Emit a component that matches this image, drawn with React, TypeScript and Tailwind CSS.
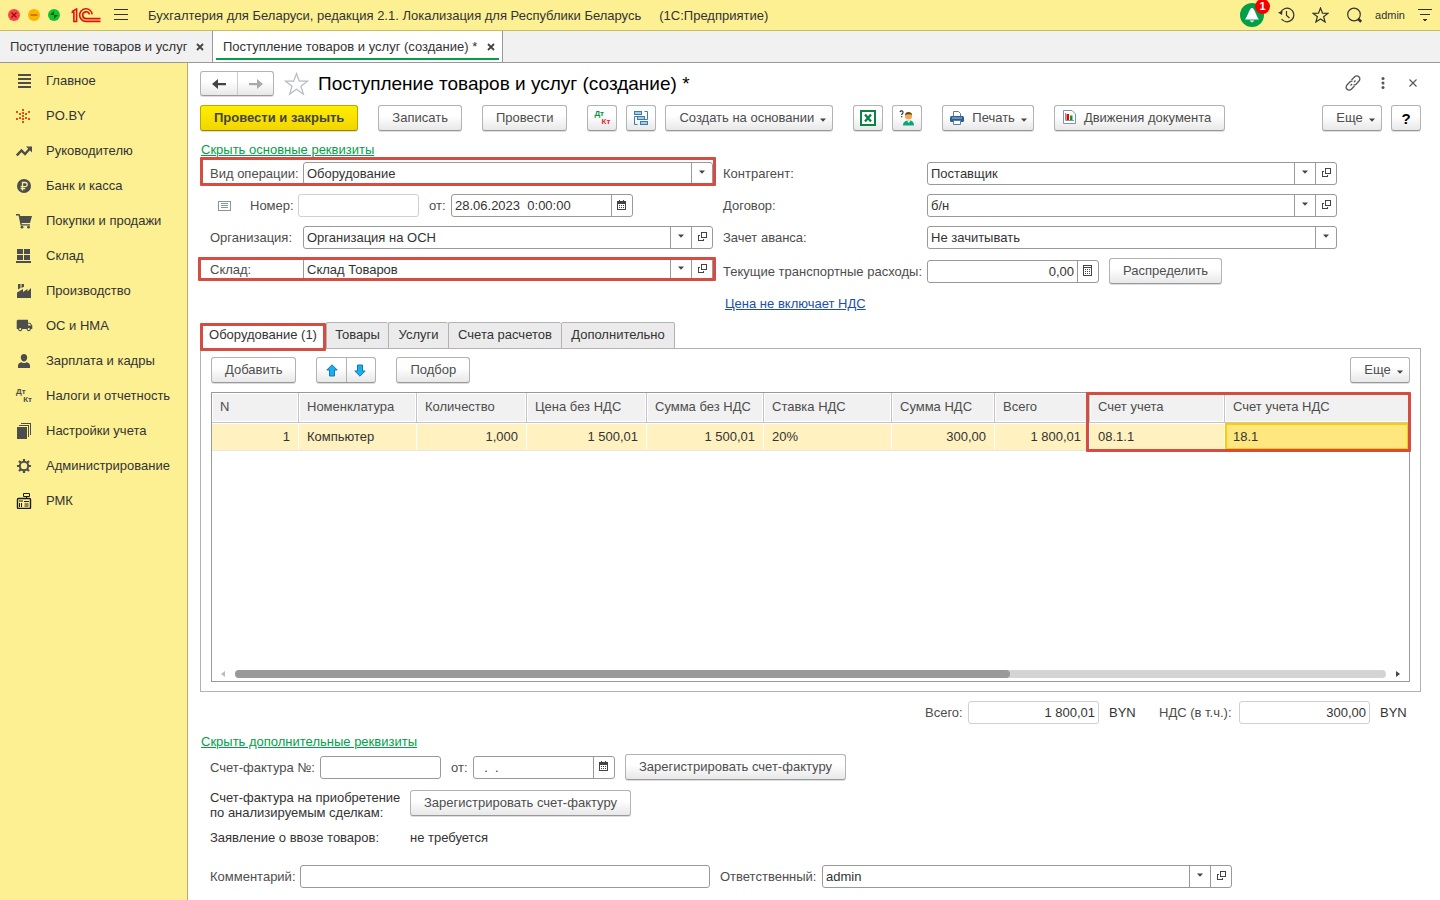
import type { ReactNode } from 'react'
import clsx from 'clsx'
import { MdLocalShipping } from 'react-icons/md'

/* ---------- small icons ---------- */

function Caret({ className }: { className?: string }) {
  return (
    <svg className={className} width="6" height="4" viewBox="0 0 6 4" fill="#444" aria-hidden="true">
      <path d="M0 0.5h6L3 3.8z" />
    </svg>
  )
}

function OpenIcon() {
  return (
    <svg width="9" height="9" viewBox="0 0 9 9" fill="none" stroke="#444" shapeRendering="crispEdges" aria-hidden="true">
      <rect x="3.5" y="0.5" width="5" height="5" />
      <path d="M2 3.5H0.5v5h5V7" />
    </svg>
  )
}

function CalendarIcon() {
  return (
    <svg width="9" height="10" viewBox="0 0 9 10" shapeRendering="crispEdges" aria-hidden="true">
      <path fill="#444" d="M0 1h9v9H0z M2 0h1v1H2z M6 0h1v1H6z" />
      <path fill="#fff" d="M1 4h7v5H1z" />
      <path fill="#444" d="M2 5h1v1H2z M4 5h1v1H4z M6 5h1v1H6z M2 7h1v1H2z M4 7h1v1H4z M6 7h1v1H6z" />
    </svg>
  )
}

function CalcIcon() {
  return (
    <svg width="9" height="11" viewBox="0 0 9 11" shapeRendering="crispEdges" aria-hidden="true">
      <path fill="#444" d="M0 0h9v11H0z" />
      <path fill="#fff" d="M1 1h7v1H1z M1 3h7v7H1z" />
      <path fill="#444" d="M2 4h1v1H2z M4 4h1v1H4z M6 4h1v1H6z M2 6h1v1H2z M4 6h1v1H4z M6 6h1v1H6z M2 8h1v1H2z M4 8h1v1H4z M6 8h1v1H6z" />
    </svg>
  )
}

function DtKt({ color }: { color?: boolean }) {
  return (
    <span className="flex w-4 flex-col text-left text-[8px] leading-[8px] font-bold" aria-hidden="true">
      <span className={color ? 'text-[#009646]' : 'text-[#4d4d4d]'}>Дт</span>
      <span className={clsx('text-right', color ? 'text-[#e5252c]' : 'text-[#4d4d4d]')}>Кт</span>
    </span>
  )
}

function Logo() {
  return (
    <svg width="30" height="15" viewBox="0 0 30 15" fill="none" stroke="#e3120b" strokeWidth="1.6" aria-label="1С">
      <path d="M0.5 4.2h2.4v9.3h2.7V1L1.2 3.4" />
      <path d="M21.2 6.4A6.3 6.3 0 1 0 15 13.4H29.5" />
      <path d="M18.4 6.4A3.4 3.4 0 1 0 15 10.6H29.5" />
    </svg>
  )
}

/* ---------- sidebar ---------- */

const ink = '#4d4d4d'

const MENU: { label: string; icon: ReactNode }[] = [
  {
    label: 'Главное',
    icon: (
      <svg width="16" height="16" viewBox="0 0 16 16" fill={ink} shapeRendering="crispEdges">
        <path d="M2 1h13v2H2z M2 5h13v2H2z M2 9h13v2H2z M2 13h13v2H2z" />
      </svg>
    ),
  },
  {
    label: 'PO.BY',
    icon: (
      <svg width="16" height="16" viewBox="0 0 16 16" fill="#e8500a" shapeRendering="crispEdges">
        <path d="M6 1h2v2H6z M6 4h2v2H6z M6 7h2v2H6z M6 10h2v2H6z M6 13h2v2H6z M0 3h2v2H0z M0 10h2v2H0z M3 5h2v2H3z M3 9h2v2H3z M9 5h2v2H9z M9 9h2v2H9z M12 3h2v2h-2z M12 10h2v2h-2z" />
      </svg>
    ),
  },
  {
    label: 'Руководителю',
    icon: (
      <svg width="16" height="16" viewBox="0 0 16 16" fill="none" stroke={ink} strokeWidth="2.4">
        <path d="M0.8 12.5L5.5 7.5l3.5 3.5 4.5-5" />
        <path d="M10 3.5h6v6z" fill={ink} stroke="none" />
      </svg>
    ),
  },
  {
    label: 'Банк и касса',
    icon: (
      <svg width="16" height="16" viewBox="0 0 16 16">
        <circle cx="8" cy="8" r="7" fill={ink} />
        <path d="M6.5 12.5V4.5h2.6a2 2 0 0 1 0 4.2H4.6M4.6 10.6h4.6" fill="none" stroke="#fcf093" strokeWidth="1.3" />
      </svg>
    ),
  },
  {
    label: 'Покупки и продажи',
    icon: (
      <svg width="16" height="16" viewBox="0 0 16 16" fill={ink}>
        <path d="M0 1h3.5l0.8 2H16l-2 7H5.5l0.3 1.2H14V12.400H4.600L2.600 2.600H0z" />
        <circle cx="6" cy="14.2" r="1.4" />
        <circle cx="12.500" cy="14.2" r="1.4" />
      </svg>
    ),
  },
  {
    label: 'Склад',
    icon: (
      <svg width="16" height="16" viewBox="0 0 16 16" fill={ink} shapeRendering="crispEdges">
        <path d="M1 1h6v5H1z M8 1h6v5H8z M1 7h6v5H1z M8 7h6v5H8z M0 13h15v2H0z" />
      </svg>
    ),
  },
  {
    label: 'Производство',
    icon: (
      <svg width="16" height="16" viewBox="0 0 16 16" fill={ink}>
        <path d="M1 15V9.5L7 6v3l4.500-3v2.600L15 5v10z M2 1h2.5v4L2 6.6z M5.5 1H8v2.8L5.5 5z" />
      </svg>
    ),
  },
  { label: 'ОС и НМА', icon: <MdLocalShipping size={17} color={ink} /> },
  {
    label: 'Зарплата и кадры',
    icon: (
      <svg width="16" height="16" viewBox="0 0 16 16" fill={ink}>
        <path d="M8 1c2 0 3.2 1.4 3.2 3.5S9.8 8.5 8 8.5 4.8 6.6 4.8 4.5 6 1 8 1z M2 15v-2.5C2 10.5 4 9.5 5.5 9.2c1.3 1.2 3.7 1.2 5 0C12 9.5 14 10.5 14 12.5V15z" />
      </svg>
    ),
  },
  { label: 'Налоги и отчетность', icon: <DtKt /> },
  {
    label: 'Настройки учета',
    icon: (
      <svg width="16" height="16" viewBox="0 0 16 16" fill={ink} shapeRendering="crispEdges">
        <path d="M1 4h10v12H1z M3 2h10v12h-1V3H3z M5 0h10v12h-1V1H5z" />
      </svg>
    ),
  },
  {
    label: 'Администрирование',
    icon: (
      <svg width="16" height="16" viewBox="0 0 16 16" fill="none" stroke={ink}>
        <circle cx="8" cy="8" r="4.2" strokeWidth="2" />
        <path
          strokeWidth="2.2"
          d="M8 1v2.5M8 12.5V15M1 8h2.5M12.5 8H15M3 3l1.8 1.8M11.2 11.2L13 13M3 13l1.8-1.8M11.2 4.8L13 3"
        />
      </svg>
    ),
  },
  {
    label: 'РМК',
    icon: (
      <svg width="16" height="16" viewBox="0 0 16 16" fill="none" stroke="#1a1a1a">
        <rect x="1.5" y="5.5" width="13" height="10" rx="1" strokeWidth="1.4" />
        <path d="M7.5 0.5h6v3h-6z M10.5 3.5v2M3 8h4M3.5 10v4M5.5 10v4M8 8.5h5M8.5 11h4M8.5 13h4" />
      </svg>
    ),
  },
]

function Sidebar() {
  return (
    <nav className="w-[188px] shrink-0 border-r border-[#b5ad6c] bg-[#fcf093]">
      {MENU.map((item) => (
        <a key={item.label} href="#" className="flex h-[35px] items-center gap-[13px] pl-4 text-[#333]">
          <span className="flex w-[17px] shrink-0">{item.icon}</span>
          {item.label}
        </a>
      ))}
    </nav>
  )
}

/* ---------- controls ---------- */

type ButtonProps = {
  children: ReactNode
  className?: string
  label?: string
  primary?: boolean
}

function Button({ children, className, label, primary }: ButtonProps) {
  return (
    <button
      type="button"
      aria-label={label}
      className={clsx(
        'flex h-[26px] shrink-0 items-center justify-center rounded-[3px] border whitespace-nowrap shadow-[0_1px_0_#00000022]',
        primary
          ? 'border-[#b8a800] border-b-[#968900] bg-linear-to-b from-[#ffee00] to-[#f2d600] font-bold text-[#444]'
          : 'border-[#b3b3b3] border-b-[#999] bg-linear-to-b from-white from-40% to-[#e8e8e8] text-[#4d4d4d]',
        className ?? 'px-[13px] pb-[2px]',
      )}
    >
      {children}
    </button>
  )
}

function MoreButton() {
  return (
    <Button className="w-[60px] pb-[2px] pl-[7px]">
      Еще
      <Caret className="mt-[5px] ml-[6px]" />
    </Button>
  )
}

function TextInput({ id, value = '', className }: { id: string; value?: string; className?: string }) {
  return (
    <input
      id={id}
      type="text"
      defaultValue={value}
      className={clsx('h-[23px] min-w-0 rounded-[3px] border bg-white px-[3px] text-[#333] outline-none', className)}
    />
  )
}

// Text box with a button at its right end (calendar, calculator)
function PickerInput(props: {
  id: string
  value: string
  action: string
  icon: ReactNode
  className?: string
  inputClassName?: string
}) {
  return (
    <div className={clsx('flex h-[23px] shrink-0 rounded-[3px] border border-[#999] bg-white', props.className)}>
      <input
        id={props.id}
        type="text"
        defaultValue={props.value}
        className={clsx('min-w-0 flex-1 px-[3px] text-[#333] outline-none', props.inputClassName)}
      />
      <button
        type="button"
        aria-label={props.action}
        className="flex w-[21px] items-center justify-center border-l border-[#999] pr-px pb-[2px]"
      >
        {props.icon}
      </button>
    </div>
  )
}

function SelectField({ id, value, open }: { id: string; value: string; open?: boolean }) {
  return (
    <div className="flex h-[23px] min-w-0 flex-1 rounded-[3px] border border-[#999] bg-white">
      <div className="relative min-w-0 flex-1">
        <select id={id} defaultValue={value} className="h-full w-full appearance-none pr-6 pl-[3px] text-[#333] outline-none">
          <option>{value}</option>
        </select>
        <span className="pointer-events-none absolute inset-y-0 right-0 flex w-[21px] items-center justify-center border-l border-[#999] pr-px pb-[3px]">
          <Caret />
        </span>
      </div>
      {open && (
        <button type="button" aria-label="Открыть" className="flex w-[21px] items-center justify-center border-l border-[#999] pb-[2px]">
          <OpenIcon />
        </button>
      )}
    </div>
  )
}

// Red frame drawn over the part of the form that needs attention
function Mark({ className }: { className: string }) {
  return <span aria-hidden="true" className={clsx('pointer-events-none absolute z-10 rounded-[1px] border-3 border-[#d54d42]', className)} />
}

/* ---------- top bars ---------- */

function TopBar() {
  return (
    <header className="flex h-[31px] shrink-0 items-center border-b border-[#c8bd63] bg-[#fcf093] pl-2 text-[#333]">
      <div className="flex gap-2">
        <svg width="12" height="12" viewBox="0 0 12 12" aria-hidden="true">
          <circle cx="6" cy="6" r="6" fill="#fb4646" />
          <path d="M3.5 3.5l5 5M8.5 3.5l-5 5" stroke="#8c0f0f" strokeWidth="1.2" />
        </svg>
        <svg width="12" height="12" viewBox="0 0 12 12" aria-hidden="true">
          <circle cx="6" cy="6" r="6" fill="#fdb400" />
          <path d="M2.5 6h7" stroke="#b36b00" strokeWidth="1.5" />
        </svg>
        <svg width="12" height="12" viewBox="0 0 12 12" aria-hidden="true">
          <circle cx="6" cy="6" r="6" fill="#13c22e" />
          <path d="M6 2v4H2z M6 10V6h4z" fill="#0b5c14" />
        </svg>
      </div>
      <span className="ml-[11px]">
        <Logo />
      </span>
      <button type="button" aria-label="Меню" className="ml-[13px]">
        <svg width="14" height="12" viewBox="0 0 14 12" stroke="#333" shapeRendering="crispEdges">
          <path d="M0 0.5h14M0 5.5h14M0 10.5h14" />
        </svg>
      </button>
      <div className="ml-5 flex gap-[18px] whitespace-nowrap">
        <span>Бухгалтерия для Беларуси, редакция 2.1. Локализация для Республики Беларусь</span>
        <span>(1С:Предприятие)</span>
      </div>

      <div className="ml-auto flex items-center pr-2">
        <button type="button" aria-label="Уведомления" className="relative flex size-6 items-center justify-center rounded-full bg-[#009f48]">
          <svg width="16" height="16" viewBox="0 0 16 16" fill="#fff">
            <path d="M8 1c1 0 1.6 0.7 1.8 1.6C11.500 4.500 12 8.500 15 12.500H1C4 8.500 4.500 4.500 6.200 2.600 6.400 1.700 7 1 8 1z M5.5 13.500h5L8 15.500z" />
          </svg>
          <span className="absolute -top-1 -right-[6px] flex size-[15px] items-center justify-center rounded-full bg-[#f40000] text-[11px] leading-none font-bold text-white">
            1
          </span>
        </button>
        <button type="button" aria-label="История" className="ml-[14px]">
          <svg width="17" height="16" viewBox="0 0 17 16" fill="none" stroke="#333" strokeWidth="1.2">
            <path d="M2.5 6A6.8 6.8 0 1 1 3.5 12" />
            <path d="M8.5 4v4.500l3 2.500" />
            <path d="M0 5.500l4.500-1.500-.5 4z" fill="#333" stroke="none" />
          </svg>
        </button>
        <button type="button" aria-label="Избранное" className="ml-[17px]">
          <svg width="17" height="16" viewBox="0 0 17 16" fill="none" stroke="#333" strokeWidth="1.2">
            <path d="M8.5 1l2 5.200 5.300.2-4.200 3.300 1.500 5.300-4.600-3-4.600 3 1.500-5.300L1.200 6.400l5.300-.2z" />
          </svg>
        </button>
        <button type="button" aria-label="Поиск" className="ml-[17px]">
          <svg width="17" height="16" viewBox="0 0 17 16" fill="none" stroke="#333">
            <circle cx="8" cy="7.500" r="6.3" strokeWidth="1.2" />
            <path d="M12 11.800l3.200 3" strokeWidth="2.6" />
          </svg>
        </button>
        <a href="#" className="ml-3 text-[11px]">
          admin
        </a>
        <button type="button" aria-label="Настройки" className="ml-[13px]">
          <svg width="14" height="14" viewBox="0 0 14 14" stroke="#333" shapeRendering="crispEdges">
            <path d="M0 1.5h14M2 6.5h10" />
            <path d="M4.500 11h5L7 13.500z" fill="#333" stroke="none" />
          </svg>
        </button>
      </div>
    </header>
  )
}

function TabCross() {
  return (
    <svg width="8" height="8" viewBox="0 0 8 8" stroke="#444" strokeWidth="1.8" aria-hidden="true">
      <path d="M1 1l6 6M7 1L1 7" />
    </svg>
  )
}

function WindowTabs() {
  return (
    <div className="flex h-8 shrink-0 border-b border-[#999] bg-[#f1f1f1] text-[#333]">
      <div className="flex w-[212px] items-center justify-between pr-2 pl-[10px] whitespace-nowrap">
        <a href="#">Поступление товаров и услуг</a>
        <button type="button" aria-label="Закрыть вкладку">
          <TabCross />
        </button>
      </div>
      <div className="flex w-[291px] flex-col border-x border-[#999] bg-white px-[3px]">
        <div className="flex flex-1 items-center justify-between pr-1 pl-[7px] whitespace-nowrap">
          <a href="#">Поступление товаров и услуг (создание) *</a>
          <button type="button" aria-label="Закрыть вкладку">
            <TabCross />
          </button>
        </div>
        <div className="-mt-1 mb-[2px] h-[2px] bg-[#009f48]" />
      </div>
    </div>
  )
}

/* ---------- form ---------- */

function TitleRow() {
  return (
    <div className="flex h-[25px] items-center">
      <div className="flex h-[25px] rounded-[3px] border border-[#b3b3b3] border-b-[#999] bg-linear-to-b from-white from-40% to-[#e8e8e8] shadow-[0_1px_0_#00000022]">
        <button type="button" aria-label="Назад" className="flex w-9 items-center justify-center">
          <svg width="14" height="12" viewBox="0 0 14 12" fill="#444">
            <path d="M0 6l6-5v4h8v2.200H6V11z" />
          </svg>
        </button>
        <button type="button" aria-label="Вперед" className="flex w-9 items-center justify-center border-l border-[#ccc]">
          <svg width="14" height="12" viewBox="0 0 14 12" fill="#aaa">
            <path d="M14 6L8 1v4H0v2.200h8V11z" />
          </svg>
        </button>
      </div>
      <button type="button" aria-label="В избранное" className="ml-[10px]">
        <svg width="25" height="24" viewBox="0 0 25 24" fill="none" stroke="#b3bcc4" strokeWidth="1.2">
          <path d="M12.500 1.500l2.800 7.700h8.200l-6.600 5 2.500 8-6.900-4.900-6.900 4.900 2.500-8-6.600-5h8.200z" />
        </svg>
      </button>
      <h1 className="ml-[9px] text-[19px] leading-6 whitespace-nowrap text-black">Поступление товаров и услуг (создание) *</h1>
      <div className="ml-auto flex items-center gap-[17px] pb-[2px]">
        <button type="button" aria-label="Ссылка">
          <svg width="16" height="16" viewBox="0 0 16 16" fill="none" stroke="#555" strokeWidth="1.3">
            <path d="M6.500 5l3.200-3.200a2.900 2.900 0 0 1 4.300 4.200L11 9.200a2.800 2.800 0 0 1-2.500.6" />
            <path d="M9.500 11l-3.200 3.200A2.900 2.900 0 0 1 2 10L5 6.800a2.800 2.800 0 0 1 2.500-.6" />
            <path d="M5.500 10.500l1.500-1.500M9 7l1.500-1.500" />
          </svg>
        </button>
        <button type="button" aria-label="Еще действия" className="flex w-[10px] justify-center">
          <svg width="4" height="12" viewBox="0 0 4 12" fill="#555">
            <circle cx="2" cy="1.6" r="1.5" />
            <circle cx="2" cy="6" r="1.5" />
            <circle cx="2" cy="10.4" r="1.5" />
          </svg>
        </button>
        <button type="button" aria-label="Закрыть" className="flex w-4 justify-center">
          <svg width="8" height="8" viewBox="0 0 8 8" stroke="#555" strokeWidth="1.1">
            <path d="M0.5 0.5l7 7M7.5 0.5l-7 7" />
          </svg>
        </button>
      </div>
    </div>
  )
}

function CommandBar() {
  return (
    <div className="mt-[9px] flex gap-5">
      <Button primary>Провести и закрыть</Button>
      <Button>Записать</Button>
      <Button>Провести</Button>
      <div className="flex gap-[9px]">
        <Button label="Дт Кт" className="w-[30px]">
          <DtKt color />
        </Button>
        <Button label="Структура подчиненности" className="w-[30px]">
          <svg width="16" height="16" viewBox="0 0 16 16" fill="none" stroke="#3b7cab">
            <path d="M4 6.500H1.500v8h3M12 9.500h2.500v-8h-3" />
            <rect x="1.500" y="1.500" width="7" height="3" fill="#a5cbe8" />
            <rect x="4.500" y="6.500" width="7" height="3" fill="#a5cbe8" />
            <rect x="7.500" y="11.500" width="7" height="3" fill="#a5cbe8" />
          </svg>
        </Button>
        <Button className="pr-[6px] pb-[2px] pl-[13px]">
          Создать на основании
          <Caret className="mt-[5px] ml-[6px]" />
        </Button>
      </div>
      <div className="flex gap-[9px]">
        <Button label="Excel" className="w-[30px]">
          <svg width="16" height="16" viewBox="0 0 16 16" fill="none" stroke="#0c8245">
            <rect x="1" y="1" width="14" height="14" fill="#fff" strokeWidth="2" />
            <path d="M5 4.500l6 7M11 4.500l-6 7" strokeWidth="2.4" />
          </svg>
        </Button>
        <Button label="Задать вопрос" className="w-[30px]">
          <svg width="16" height="16" viewBox="0 0 16 16">
            <path d="M4 15.500c0-3.500 2-4.500 4.500-5h3c2 .6 3.500 2 3.500 5z" fill="#10a37c" />
            <circle cx="9.500" cy="6" r="3.6" fill="#f5a94e" />
            <path d="M6 5c0-4 7-4 7.200 0-1.500-1-4.500-1.200-7.200 0z" fill="#6b4317" />
            <path d="M8 10.500h3.500L9.800 13z" fill="#fff" />
            <path d="M1 2c.5-1.500 3.200-1.500 3 .5C3.900 3.800 2.700 3.700 2.700 5M2.700 6v1.200" fill="none" stroke="#333" strokeWidth="1.2" />
          </svg>
        </Button>
      </div>
      <Button className="pr-[6px] pb-[2px] pl-[7px]">
        <svg width="14" height="14" viewBox="0 0 14 14" className="mt-[2px] mr-2">
          <path d="M3.500 6V0.500h5l2 2V6" fill="#fff" stroke="#5b7da0" />
          <rect x="0" y="5" width="14" height="6" rx="1.5" fill="#2c5d8c" />
          <path d="M3.500 9.500h7v4h-7z" fill="#fff" stroke="#5b7da0" />
          <path d="M2 7h10" stroke="#a6c4dd" />
        </svg>
        Печать
        <Caret className="mt-[5px] ml-[6px]" />
      </Button>
      <Button className="pr-[13px] pb-[2px] pl-[8px]">
        <svg width="13" height="14" viewBox="0 0 13 14" className="mr-2">
          <path d="M0.500 0.500h8.500l3.500 3.500v9.500h-12z" fill="#fff" stroke="#8095a8" />
          <path d="M3.500 4h2.500v6H3.500z" fill="#e60000" />
          <path d="M7 5.500h2.500V10H7z" fill="#0a9a2f" />
          <path d="M2.500 3v7.500H11" fill="none" stroke="#8095a8" />
        </svg>
        Движения документа
      </Button>
      <div className="ml-auto flex gap-[9px]">
        <MoreButton />
        <Button label="Справка" className="w-[30px]">
          <span className="text-[15px] font-bold text-black">?</span>
        </Button>
      </div>
    </div>
  )
}

const leftLabel = 'w-[93px] shrink-0'
const rightLabel = 'w-[204px] shrink-0'

function MainFields() {
  return (
    <div className="mt-[5px] flex gap-[10px] text-[#4d4d4d]">
      <div className="flex max-w-[513px] min-w-0 flex-1 flex-col gap-[9px]">
        <div className="relative flex items-center pl-[10px]">
          <label htmlFor="operation" className={leftLabel}>
            Вид операции:
          </label>
          <SelectField id="operation" value="Оборудование" />
          <Mark className="-top-[5px] -right-[3px] -bottom-px left-0" />
        </div>
        <div className="flex items-center pl-[18px]">
          <svg width="13" height="10" viewBox="0 0 13 10" fill="none" stroke="#8194ab" shapeRendering="crispEdges">
            <path d="M0.5 0.5h12v9H0.5zM3 2.5h7M3 4.5h7M3 6.5h7" />
          </svg>
          <label htmlFor="number" className="ml-[19px] w-12">
            Номер:
          </label>
          <TextInput id="number" className="w-[121px] border-[#d0d0d0]" />
          <label htmlFor="date" className="ml-[10px] w-[22px]">
            от:
          </label>
          <PickerInput id="date" value="28.06.2023  0:00:00" action="Выбрать дату" icon={<CalendarIcon />} className="w-[182px]" />
        </div>
        <div className="flex items-center pl-[10px]">
          <label htmlFor="organization" className={leftLabel}>
            Организация:
          </label>
          <SelectField id="organization" value="Организация на ОСН" open />
        </div>
        <div className="relative flex items-center pl-[10px]">
          <label htmlFor="warehouse" className={leftLabel}>
            Склад:
          </label>
          <SelectField id="warehouse" value="Склад Товаров" open />
          <Mark className="-top-px -right-[3px] bottom-0 -left-[2px]" />
        </div>
      </div>

      <div className="flex max-w-[614px] min-w-0 flex-1 flex-col gap-[9px]">
        <div className="flex items-center">
          <label htmlFor="partner" className={rightLabel}>
            Контрагент:
          </label>
          <SelectField id="partner" value="Поставщик" open />
        </div>
        <div className="flex items-center">
          <label htmlFor="contract" className={rightLabel}>
            Договор:
          </label>
          <SelectField id="contract" value="б/н" open />
        </div>
        <div className="flex items-center">
          <label htmlFor="advance" className={rightLabel}>
            Зачет аванса:
          </label>
          <SelectField id="advance" value="Не зачитывать" />
        </div>
        <div className="flex items-center">
          <label htmlFor="transport" className={clsx(rightLabel, 'whitespace-nowrap')}>
            Текущие транспортные расходы:
          </label>
          <PickerInput
            id="transport"
            value="0,00"
            action="Калькулятор"
            icon={<CalcIcon />}
            className="mr-[10px] w-[172px]"
            inputClassName="text-right"
          />
          <Button>Распределить</Button>
        </div>
        <a href="#" className="mt-[3px] ml-[2px] self-start text-[#1a4fae] underline">
          Цена не включает НДС
        </a>
      </div>
    </div>
  )
}

const TABS = [
  { title: 'Товары', width: 'w-[62px]' },
  { title: 'Услуги', width: 'w-[60px]' },
  { title: 'Счета расчетов', width: 'w-[113px]' },
  { title: 'Дополнительно', width: 'w-[114px]' },
]

const COLUMNS = [
  { title: 'N', width: 'w-[87px]', value: '1', numeric: true },
  { title: 'Номенклатура', width: 'w-[118px]', value: 'Компьютер' },
  { title: 'Количество', width: 'w-[110px]', value: '1,000', numeric: true },
  { title: 'Цена без НДС', width: 'w-[120px]', value: '1 500,01', numeric: true },
  { title: 'Сумма без НДС', width: 'w-[117px]', value: '1 500,01', numeric: true },
  { title: 'Ставка НДС', width: 'w-[128px]', value: '20%' },
  { title: 'Сумма НДС', width: 'w-[103px]', value: '300,00', numeric: true },
  { title: 'Всего', width: 'w-[95px]', value: '1 800,01', numeric: true },
  { title: 'Счет учета', width: 'w-[135px]', value: '08.1.1' },
  { title: 'Счет учета НДС', width: '', value: '18.1', active: true },
]

function ItemsTable() {
  return (
    <div className="relative mt-[9px] flex min-h-[160px] flex-1 flex-col border border-[#999] bg-white">
      <table className="w-full table-fixed border-separate border-spacing-0">
        <colgroup>
          {COLUMNS.map((col) => (
            <col key={col.title} className={col.width} />
          ))}
        </colgroup>
        <thead>
          <tr>
            {COLUMNS.map((col, i) => (
              <th
                key={col.title}
                className={clsx(
                  'h-[30px] border-b border-[#c4c4c4] bg-[#f1f1f1] px-2 pb-[2px] text-left font-normal whitespace-nowrap text-[#4d4d4d] shadow-[inset_0_0_0_1px_#fff]',
                  i < COLUMNS.length - 1 && 'border-r',
                )}
              >
                {col.title}
              </th>
            ))}
          </tr>
        </thead>
        <tbody>
          <tr>
            {COLUMNS.map((col) => (
              <td
                key={col.title}
                className={clsx(
                  'h-7 border-b border-[#e6e6e6] pr-[9px] pl-2 whitespace-nowrap text-[#333]',
                  col.numeric && 'text-right',
                  col.active
                    ? 'bg-[#ffe77f] shadow-[inset_0_0_0_2px_#ffcc00]'
                    : 'bg-[#fff2c0] shadow-[inset_-1px_0_0_#fff,inset_0_1px_0_#fff]',
                )}
              >
                {col.value}
              </td>
            ))}
          </tr>
        </tbody>
      </table>
      <Mark className="-top-px -right-[2px] left-[874px] h-[60px]" />
      <div className="mt-auto flex h-[15px] items-center px-[9px]">
        <svg width="4" height="6" viewBox="0 0 4 6" fill="#bbb">
          <path d="M4 0v6L0 3z" />
        </svg>
        <div className="mx-[10px] h-2 flex-1 rounded-full bg-[#d4d4d4]">
          <div className="h-2 w-[67.3%] rounded-full bg-[#999]" />
        </div>
        <svg width="4" height="6" viewBox="0 0 4 6" fill="#444">
          <path d="M0 0v6l4-3z" />
        </svg>
      </div>
    </div>
  )
}

function ItemsPanel() {
  return (
    <section className="mt-[11px] flex flex-1 flex-col">
      <div role="tablist" className="z-10 -mb-px flex h-[27px] whitespace-nowrap text-[#333]">
        <button type="button" role="tab" aria-selected="true" className="relative w-[126px] bg-white pb-[2px]">
          Оборудование (1)
          <Mark className="inset-x-0 top-px -bottom-[2px]" />
        </button>
        {TABS.map((tab) => (
          <button
            key={tab.title}
            type="button"
            role="tab"
            aria-selected="false"
            className={clsx(
              'rounded-t-[2px] border border-r-0 border-[#b3b3b3] bg-[#ebebeb] pb-[2px] last:border-r',
              tab.width,
            )}
          >
            {tab.title}
          </button>
        ))}
      </div>
      <div className="flex flex-1 flex-col border border-[#b3b3b3] px-[10px] pt-2 pb-[9px]">
        <div className="flex gap-5">
          <Button>Добавить</Button>
          <div className="flex h-[26px] rounded-[3px] border border-[#b3b3b3] border-b-[#999] bg-linear-to-b from-white from-40% to-[#e8e8e8] shadow-[0_1px_0_#00000022]">
            <button type="button" aria-label="Вверх" className="flex w-[29px] items-center justify-center">
              <svg width="12" height="13" viewBox="0 0 12 13" fill="#18aef0" stroke="#1779ad">
                <path d="M6 0.8L11.2 6H8.500v6h-5V6H0.8z" />
              </svg>
            </button>
            <button type="button" aria-label="Вниз" className="flex w-[29px] items-center justify-center border-l border-[#b3b3b3] pr-[3px]">
              <svg width="12" height="13" viewBox="0 0 12 13" fill="#18aef0" stroke="#1779ad">
                <path d="M6 12.2L0.8 7h2.700V1h5v6h2.700z" />
              </svg>
            </button>
          </div>
          <Button>Подбор</Button>
          <div className="ml-auto">
            <MoreButton />
          </div>
        </div>
        <ItemsTable />
      </div>
    </section>
  )
}

function Totals() {
  return (
    <div className="mt-[9px] flex items-center justify-end pr-[13px] whitespace-nowrap text-[#4d4d4d]">
      <label htmlFor="total" className="w-[43px]">
        Всего:
      </label>
      <TextInput id="total" value="1 800,01" className="w-[131px] border-[#d0d0d0] text-right" />
      <span className="ml-[10px] w-7 text-[#333]">BYN</span>
      <label htmlFor="vat" className="ml-[22px] w-20">
        НДС (в т.ч.):
      </label>
      <TextInput id="vat" value="300,00" className="w-[131px] border-[#d0d0d0] text-right" />
      <span className="ml-[10px] w-7 text-[#333]">BYN</span>
    </div>
  )
}

function ExtraFields() {
  return (
    <div className="pl-[10px] text-[#4d4d4d]">
      <div className="mt-[5px] flex items-center">
        <label htmlFor="invoice" className="w-[110px]">
          Счет-фактура №:
        </label>
        <TextInput id="invoice" className="w-[121px] border-[#999]" />
        <label htmlFor="invoice-date" className="ml-[10px] w-[22px]">
          от:
        </label>
        <PickerInput
          id="invoice-date"
          value="  .  ."
          action="Выбрать дату"
          icon={<CalendarIcon />}
          className="mr-[10px] w-[142px]"
        />
        <Button>Зарегистрировать счет-фактуру</Button>
      </div>
      <div className="mt-[10px] flex items-start">
        <span className="w-[200px] text-[#333]">
          Счет-фактура на приобретение
          <br />
          по анализируемым сделкам:
        </span>
        <Button>Зарегистрировать счет-фактуру</Button>
      </div>
      <div className="mt-[10px] flex text-[#333]">
        <span className="w-[200px]">Заявление о ввозе товаров:</span>
        <span>не требуется</span>
      </div>
      <div className="mt-5 flex max-w-[1022px] items-center">
        <label htmlFor="comment" className="w-[90px] shrink-0">
          Комментарий:
        </label>
        <div className="flex min-w-0 flex-1">
          <TextInput id="comment" className="w-full border-[#999]" />
        </div>
        <div className="flex flex-[0_1_522px] items-center pl-[10px]">
          <label htmlFor="responsible" className="w-[102px] shrink-0">
            Ответственный:
          </label>
          <SelectField id="responsible" value="admin" open />
        </div>
      </div>
    </div>
  )
}

export default function App() {
  return (
    <div className="flex min-h-screen flex-col bg-white font-['Liberation_Sans',Arial,sans-serif] text-[13px] leading-[15px]">
      <TopBar />
      <WindowTabs />
      <div className="flex flex-1">
        <Sidebar />
        <main className="flex min-w-0 flex-1 flex-col pt-2 pr-[19px] pb-3 pl-3">
          <TitleRow />
          <CommandBar />
          <a href="#" className="mt-[11px] ml-px self-start text-[#009f48] underline">
            Скрыть основные реквизиты
          </a>
          <MainFields />
          <ItemsPanel />
          <Totals />
          <a href="#" className="mt-[10px] ml-px self-start text-[#009f48] underline">
            Скрыть дополнительные реквизиты
          </a>
          <ExtraFields />
        </main>
      </div>
    </div>
  )
}
